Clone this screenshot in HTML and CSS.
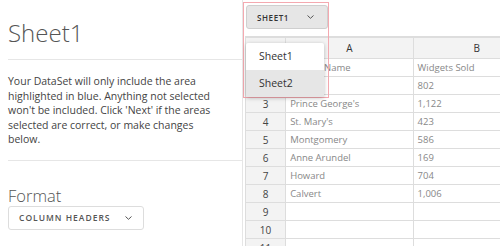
FILE: index.html
```html
<!DOCTYPE html>
<html lang="en">
<head>
    <meta charset="UTF-8">
    <meta name="viewport" content="width=device-width, initial-scale=1.0">
    <title>Sheet1</title>
    <link rel="stylesheet" href="styles.css">
</head>
<body>
    <div class="layout">
        <div class="panel">
            <h1 class="title">Sheet1</h1>
            <hr class="rule">
            <p class="intro">Your DataSet will only include the area highlighted in blue. Anything not selected won't be included. Click 'Next' if the areas selected are correct, or make changes below.</p>
            <hr class="rule rule-low">
            <h2 class="subtitle">Format</h2>
            <div class="select">
                <span>COLUMN HEADERS</span>
                <svg class="chevron" width="7" height="4" viewBox="0 0 7 4"><path d="M0.5 0.5 L3.5 3.3 L6.5 0.5" fill="none" stroke="#555" stroke-width="1"/></svg>
            </div>
        </div>
        <div class="sheet">
            <div class="sheet-bar">
                <div class="select select-sheet">
                    <span>SHEET1</span>
                    <svg class="chevron" width="7" height="4" viewBox="0 0 7 4"><path d="M0.5 0.5 L3.5 3.3 L6.5 0.5" fill="none" stroke="#555" stroke-width="1"/></svg>
                </div>
            </div>
            <table class="grid">
                <colgroup>
                    <col class="col-num">
                    <col class="col-data">
                    <col class="col-data">
                </colgroup>
                <thead>
                    <tr><th></th><th>A</th><th>B</th></tr>
                </thead>
                <tbody>
                    <tr><td class="num">1</td><td>County Name</td><td>Widgets Sold</td></tr>
                    <tr><td class="num">2</td><td>Charles</td><td>802</td></tr>
                    <tr><td class="num">3</td><td>Prince George's</td><td>1,122</td></tr>
                    <tr><td class="num">4</td><td>St. Mary's</td><td>423</td></tr>
                    <tr><td class="num">5</td><td>Montgomery</td><td>586</td></tr>
                    <tr><td class="num">6</td><td>Anne Arundel</td><td>169</td></tr>
                    <tr><td class="num">7</td><td>Howard</td><td>704</td></tr>
                    <tr><td class="num">8</td><td>Calvert</td><td>1,006</td></tr>
                    <tr><td class="num">9</td><td></td><td></td></tr>
                    <tr><td class="num">10</td><td></td><td></td></tr>
                    <tr><td class="num">11</td><td></td><td></td></tr>
                </tbody>
            </table>
            <div class="focus-ring"></div>
            <ul class="menu">
                <li>Sheet1</li>
                <li class="active">Sheet2</li>
            </ul>
        </div>
    </div>
</body>
</html>
```

FILE: styles.css
```css
body, html {
    margin: 0;
    padding: 0;
    height: 100%;
    overflow: hidden;
    background-color: #fff;
    font-family: 'Open Sans', 'Liberation Sans', sans-serif;
}
.layout {
    display: flex;
    height: 100%;
}
.panel {
    width: 234px;
    padding-left: 8px;
    flex-shrink: 0;
}
.title {
    margin: 18px 0 0;
    font-size: 24px;
    line-height: 30px;
    font-weight: 300;
    color: #555;
}
.rule {
    margin: 11px 0 0;
    border: 0;
    border-top: 1px solid #e6e6e6;
}
.intro {
    margin: 14px 14px 0 0;
    font-size: 10.5px;
    line-height: 14.6px;
    color: #444;
}
.rule-low {
    margin-top: 13px;
}
.subtitle {
    margin: 25px 0 0;
    font-size: 16.5px;
    line-height: 20px;
    font-weight: 300;
    color: #555;
}
.select {
    display: flex;
    align-items: center;
    justify-content: space-between;
    box-sizing: border-box;
    width: 136px;
    height: 24px;
    padding: 0 11px 0 10px;
    border: 1px solid #ddd;
    border-radius: 3px;
    font-size: 8.5px;
    font-weight: 600;
    letter-spacing: 1px;
    color: #555;
}
.chevron {
    display: block;
}
.sheet {
    position: relative;
    flex: 1;
    overflow: hidden;
    border-left: 1px solid #e6e6e6;
}
.sheet-bar {
    padding: 5px 0 0 3px;
    height: 32px;
    box-sizing: border-box;
}
.select-sheet {
    width: 82px;
    background-color: #e6e6e6;
    border-color: #cfcfcf;
    color: #333;
    font-size: 8px;
    letter-spacing: 0.6px;
    padding-right: 13px;
}
.grid {
    margin: 4px 0 0 2px;
    border-collapse: collapse;
    table-layout: fixed;
    width: 296px;
    font-size: 9.5px;
    border-top: 2px solid #ddd;
}
.col-num { width: 40px; }
.col-data { width: 127px; }
.grid th, .grid td {
    border: 1px solid #ddd;
    height: 17px;
    padding: 0 4px;
    white-space: nowrap;
    overflow: hidden;
}
.grid th {
    height: 20px;
    background-color: #f3f3f3;
    font-weight: 400;
    font-size: 10px;
    color: #333;
    text-align: center;
}
.grid td {
    color: #888;
}
.grid td.num {
    background-color: #f3f3f3;
    color: #444;
    font-size: 10px;
    text-align: center;
}
.focus-ring {
    position: absolute;
    left: 0;
    top: 2px;
    width: 86px;
    height: 96px;
    border: 1px solid #f4a9b0;
    box-sizing: border-box;
}
.menu {
    position: absolute;
    left: 3px;
    top: 43px;
    width: 78px;
    margin: 0;
    padding: 0;
    list-style: none;
    background-color: #fff;
    border-radius: 2px;
    box-shadow: 0 1px 4px rgba(0, 0, 0, 0.25);
}
.menu li {
    height: 27px;
    line-height: 27px;
    padding-left: 13px;
    font-size: 10.5px;
    color: #333;
}
.menu li.active {
    background-color: #e6e6e6;
}
```
